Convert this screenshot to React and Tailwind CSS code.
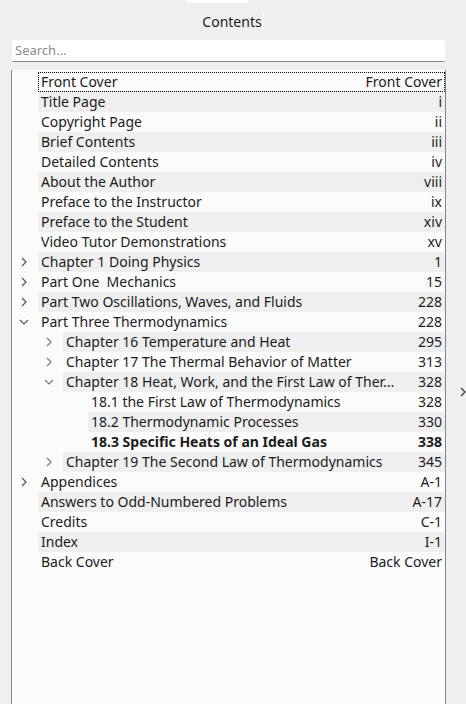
import React from "react";

const items = [
  { t: "Front Cover", p: "Front Cover", l: 0, focus: true },
  { t: "Title Page", p: "i", l: 0 },
  { t: "Copyright Page", p: "ii", l: 0 },
  { t: "Brief Contents", p: "iii", l: 0 },
  { t: "Detailed Contents", p: "iv", l: 0 },
  { t: "About the Author", p: "viii", l: 0 },
  { t: "Preface to the Instructor", p: "ix", l: 0 },
  { t: "Preface to the Student", p: "xiv", l: 0 },
  { t: "Video Tutor Demonstrations", p: "xv", l: 0 },
  { t: "Chapter 1 Doing Physics", p: "1", l: 0, c: "closed" },
  { t: "Part One  Mechanics", p: "15", l: 0, c: "closed" },
  { t: "Part Two Oscillations, Waves, and Fluids", p: "228", l: 0, c: "closed" },
  { t: "Part Three Thermodynamics", p: "228", l: 0, c: "open" },
  { t: "Chapter 16 Temperature and Heat", p: "295", l: 1, c: "closed" },
  { t: "Chapter 17 The Thermal Behavior of Matter", p: "313", l: 1, c: "closed" },
  { t: "Chapter 18 Heat, Work, and the First Law of Ther...", p: "328", l: 1, c: "open" },
  { t: "18.1 the First Law of Thermodynamics", p: "328", l: 2 },
  { t: "18.2 Thermodynamic Processes", p: "330", l: 2 },
  { t: "18.3 Specific Heats of an Ideal Gas", p: "338", l: 2, bold: true },
  { t: "Chapter 19 The Second Law of Thermodynamics", p: "345", l: 1, c: "closed" },
  { t: "Appendices", p: "A-1", l: 0, c: "closed" },
  { t: "Answers to Odd-Numbered Problems", p: "A-17", l: 0 },
  { t: "Credits", p: "C-1", l: 0 },
  { t: "Index", p: "I-1", l: 0 },
  { t: "Back Cover", p: "Back Cover", l: 0 },
];

function Chevron({ open, light }) {
  return (
    <svg width="12" height="12" viewBox="0 0 12 12" fill="none" stroke={light ? "#7a7a7a" : "#555"} strokeWidth="1.2">
      {open ? <path d="M2 4 L6 8 L10 4" /> : <path d="M4 2 L8 6 L4 10" />}
    </svg>
  );
}

function Row({ item, index }) {
  const spacer = item.l === 0 ? "w-0" : item.l === 1 ? "w-[25px]" : "w-[50px]";
  const stripe = index % 2 === 1 ? "bg-[#efeff0]" : "";
  return (
    <div className="flex h-[20px]">
      <div className={`${spacer} shrink-0`}></div>
      <div className="w-[26px] shrink-0 flex items-center pl-[6px]">
        {item.c && <Chevron open={item.c === "open"} light={item.l > 0} />}
      </div>
      <div
        className={`flex-1 min-w-0 flex items-center pl-[3px] pr-[3px] ${stripe} ${
          item.focus ? "outline-1 outline-dotted outline-black -outline-offset-1" : ""
        } ${item.bold ? "font-bold" : ""}`}
      >
        <span className="flex-1 min-w-0 whitespace-pre">{item.t}</span>
        <span className="shrink-0">{item.p}</span>
      </div>
    </div>
  );
}

export default function App() {
  return (
    <div
      className="relative w-[466px] h-[704px] bg-[#eeeff1] flex flex-col overflow-hidden text-[#1b1b1b]"
      style={{ fontFamily: '"Noto Sans", "Open Sans", sans-serif' }}
    >
      <div className="h-[3px] flex">
        <div className="ml-[187px] w-[61px] h-[3px] bg-white"></div>
      </div>
      <div className="h-[37px] flex items-center justify-center text-[14px] pb-[1px]">
        <span>Contents</span>
        <span className="w-px h-[18px] bg-white ml-[1px]"></span>
      </div>
      <div className="ml-[12px] w-[433px] h-[22px] bg-white border-b border-[#8a8a8a] rounded-[2px] flex items-center pl-[3px] text-[13px] text-[#8a8a8a]">
        Search...
      </div>
      <div className="ml-[11px] mt-[8px] w-[435px] flex-1 bg-[#fbfbfb] border-l border-r border-[#858585] pt-[2px] text-[14px] leading-[20px]">
        {items.map((it, i) => (
          <Row key={i} item={it} index={i} />
        ))}
      </div>
      <svg className="absolute left-[460px] top-[386px]" width="6" height="12" viewBox="0 0 6 12" fill="none" stroke="#333" strokeWidth="1.2">
        <path d="M1 2 L5 6 L1 10" />
      </svg>
    </div>
  );
}
